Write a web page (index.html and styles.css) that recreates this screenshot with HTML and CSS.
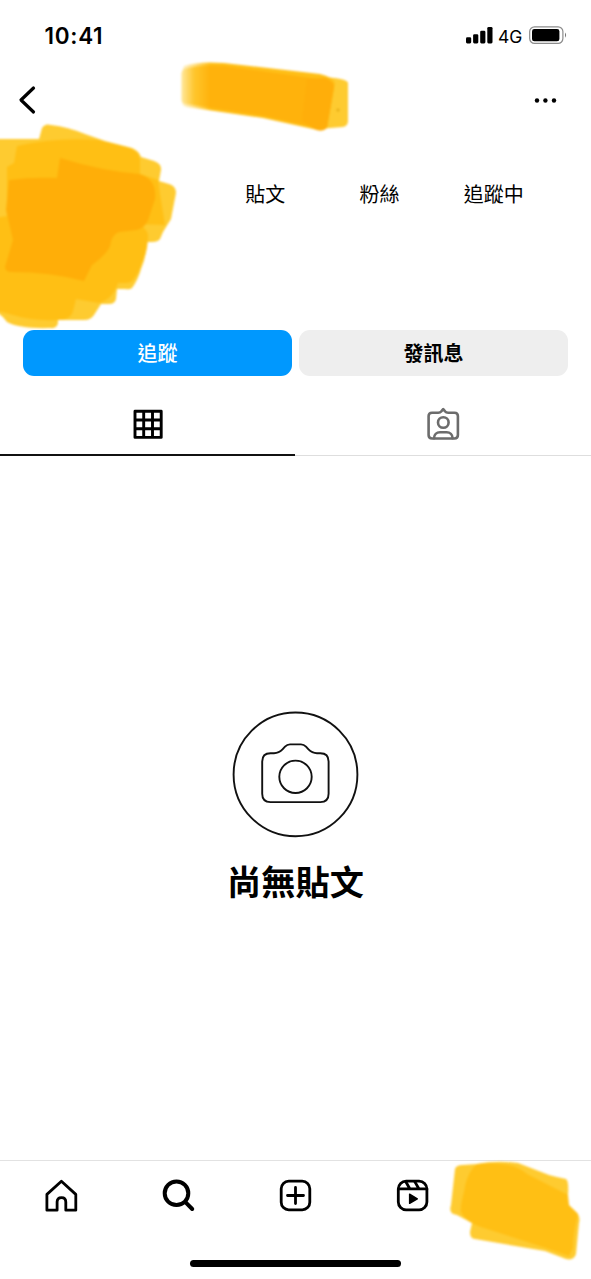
FILE: index.html
```html
<!DOCTYPE html>
<html lang="zh-Hant">
<head>
<meta charset="utf-8">
<title>個人檔案</title>
<link rel="stylesheet" href="styles.css">
</head>
<body>
<div class="screen">
  <div class="status">
    <span class="time">10:41</span>
    <div class="indicators">
      <svg class="signal" width="28" height="18" viewBox="465 26 28 18"><rect x="466" y="37.2" width="5.2" height="6.2" rx="1.3"/><rect x="473.1" y="34.2" width="5.2" height="9.2" rx="1.3"/><rect x="480.2" y="30.8" width="5.2" height="12.6" rx="1.3"/><rect x="487.3" y="27" width="5.2" height="16.4" rx="1.3"/></svg>
      <span class="network">4G</span>
      <svg class="battery" width="38" height="18" viewBox="529 26 38 18"><rect x="529.7" y="26.8" width="33.2" height="16.6" rx="4.8" fill="none" stroke="#8c8c8c" stroke-width="1.2"/><rect x="532" y="29" width="27.4" height="12.3" rx="2.4"/><path d="M565 32.5q2.2 2.6 0 5.2z" fill="#777"/></svg>
    </div>
  </div>

  <header class="topbar">
    <svg width="20" height="30" viewBox="18 85 20 30"><path d="M33.5 88 21 100l12.5 12" class="line back"/></svg>
    <svg width="24" height="6" viewBox="0 0 24 6"><circle cx="3" cy="3.5" r="2.2"/><circle cx="11.4" cy="3.5" r="2.2"/><circle cx="20" cy="3.5" r="2.2"/></svg>
  </header>

  <section class="profile">
    <div class="stats"><span>貼文</span><span>粉絲</span><span>追蹤中</span></div>
  </section>

  <div class="actions">
    <button class="btn primary">追蹤</button>
    <button class="btn">發訊息</button>
  </div>

  <nav class="tabs">
    <div class="tab active">
      <svg width="32" height="32" viewBox="132 408 32 32"><path d="M135 411.2h26.2v26.2h-26.2zM143.7 411.2v26.2M152.5 411.2v26.2M135 420h26.2M135 428.7h26.2" class="line grid"/></svg>
    </div>
    <div class="tab">
      <svg width="36" height="36" viewBox="425 406 36 36"><path d="M432 412.7h6.2c1.7 0 2.5-.5 3.3-1.5l1.7-2 1.7 2c.8 1 1.6 1.5 3.3 1.5h6.3q3.4 0 3.4 3.4v19q0 3.4-3.4 3.4H432q-3.4 0-3.4-3.4v-19q0-3.4 3.4-3.4z" class="line muted"/><circle cx="443.3" cy="422.5" r="5.3" class="line muted"/><path d="M434 438.2c0-3.7 2.6-6 6-6h6.6c3.4 0 6 2.3 6 6" class="line muted"/></svg>
    </div>
  </nav>

  <main class="empty">
    <svg width="128" height="128" viewBox="232 711 128 128"><circle cx="295.5" cy="774.4" r="61.9" class="line thin"/><path d="M270.5 753.2h3.5c4.2 0 6-1.1 8.5-3.8l2.5-2.7c1.5-1.6 2.7-2.3 5-2.3h11c2.3 0 3.5.7 5 2.3l2.5 2.7c2.5 2.7 4.3 3.8 8.5 3.8h3.3q8.3 0 8.3 8.3v32.3q0 8.3-8.3 8.3h-49.8q-8.3 0-8.3-8.3v-32.3q0-8.3 8.3-8.3z" class="line thin"/><circle cx="295.5" cy="776.8" r="16.2" class="line thin"/></svg>
    <h1>尚無貼文</h1>
  </main>

  <footer class="bottom">
    <nav class="dock">
      <svg width="36" height="36" viewBox="44 1178 36 36"><path d="M46.9 1210.2v-15.8l14.5-13.1 14.4 13.1v15.8h-10v-8.3q0-4.3-4.3-4.3t-4.4 4.3v8.3z" class="line icon"/></svg>
      <svg width="36" height="36" viewBox="161 1178 36 36"><circle cx="176.5" cy="1193.3" r="11.8" class="line search"/><path d="m185.4 1202.2 6.8 6.8" class="line search"/></svg>
      <svg width="36" height="36" viewBox="278 1178 36 36"><rect x="281.2" y="1181.2" width="28.6" height="28.6" rx="7.5" class="line icon"/><path d="M295.5 1187.5v16M287.5 1195.5h16" class="line icon"/></svg>
      <svg width="36" height="36" viewBox="395 1178 36 36"><rect x="398.3" y="1181.2" width="28.6" height="28.6" rx="7.8" class="line icon"/><path d="M398.3 1188.9h28.6M405.8 1181.7l4 7M414.6 1181.4l4.3 7.3" class="line icon"/><path d="M409.6 1194.2v9.2l7.7-4.6z" class="play"/></svg>
      <span></span>
    </nav>
    <div class="home-indicator"></div>
  </footer>

  <svg class="marker" width="591" height="1279" viewBox="0 0 591 1279">
    <defs>
      <linearGradient id="fade" gradientUnits="userSpaceOnUse" x1="180" y1="0" x2="210" y2="0"><stop stop-color="#ffd75a" stop-opacity=".3"/><stop offset=".5" stop-color="#ffc52a"/><stop offset="1" stop-color="#ffb20c"/></linearGradient>
      <linearGradient id="edge" gradientUnits="userSpaceOnUse" x1="180" y1="0" x2="210" y2="0"><stop stop-color="#ffd75a" stop-opacity=".3"/><stop offset="1" stop-color="#ffbf17"/></linearGradient>
    </defs>
    <g>
      <path fill="#fecb30" d="M320 77q27 1 28 6v38q0 5-5 6l-25 2z"/>
      <path fill="url(#edge)" d="M184 66q14-5 40-3l96 11q13 3 15 9l-8 44q-4 4-14 2l-50-11-76-11q-5-1-5-5V71z"/>
      <path fill="url(#fade)" d="M184 69q16-5 41-3l94 13q15 1 15 8l-7 39q-3 4-14 1l-49-11-78-12q-5-1-5-5V73z"/>
      <path fill="#ffae0a" d="M307 79l18-1q9 3 9 9l-7 41q-5 5-13 1l-12-9z"/>
      <circle cx="338" cy="110" r="1.5" fill="#e6ad16"/>
    </g>
    <g>
      <path fill="#fecb30" d="M-5 139h44l3-11q3-5 9-3 17 2 34 9l20 7 27 7q7 3 9 9l13 4q8 3 7 9l-2 11 10 3q7 2 7 9l-5 26-8 13-3 7q-2 3-8 3h-5q-1 16-6 27-3 11-9 19-2 2-7 1h-8l-1 10q-1 5-7 5h-8l-7 11q-3 5-10 5H58v3q-1 6-8 5-30 1-43-6-4-6-12-11z"/>
      <path fill="#ffbf14" d="M17 146q38-9 81-6l28 7q13 3 14 13v14l18 6 2 14 5 31-26-1q8 5 9 11 0 17-6 27-3 11-9 18-2 3-8 3h-7q-5 16-19 20l-23-4-3 12q-2 9-16 9-26 1-44-5l-18-5V218l12-2V167l7-4z"/>
      <path fill="#ffae08" d="M9 180q23-3 48-2l3-20q42 13 79 16 18 5 16 25l-7 21q-3 8-12 10l-17 2q-7 2-9 14-3 8-18 19l-8 16q-34-9-72-9-7 0-7-5l8-27-7-30z"/>
    </g>
    <g>
      <path fill="#fecb30" d="M455 1169q1-4 8-4l14-1q19-4 41-1l31 12q7 2 17 4 3 2 2 16l-1 9 8 7q6 5 4 12l-3 31q-2 7-10 5l-21-8-70-12q-5 0-5-7l2-9-15-8q-9-1-6-10z"/>
      <path fill="#ffbf14" d="M477 1164q14-2 31 1 11 2 19 9l41 21 1 10 9 9q-5 20-5 34l-4 8-23-8-65-21q-15-5-20-15-1-5 3-20 2-15 9-24z"/>
    </g>
  </svg>
</div>
</body>
</html>
```
FILE: styles.css
```css
* { box-sizing: border-box; }
body { margin: 0; background: #fff; color: #000; font-family: "Liberation Sans", "Noto Sans CJK TC", sans-serif; }
.screen { position: relative; width: 591px; height: 1279px; overflow: hidden; display: flex; flex-direction: column; }
svg { display: block; flex: none; }
.line { fill: none; stroke: #000; stroke-linecap: round; stroke-linejoin: round; }
.back { stroke-width: 3.2; }
.grid { stroke-width: 2.9; }
.muted { stroke: #6c6c6c; stroke-width: 2.6; }
.thin { stroke: #111; stroke-width: 1.9; }
.icon { stroke-width: 2.8; }
.search { stroke-width: 4; }
.play { stroke: #000; stroke-width: 1.4; stroke-linejoin: round; }

.status { height: 70px; padding: 0 24px 0 44.5px; display: flex; align-items: center; justify-content: space-between; font-family: Inter, sans-serif; }
.time { padding-top: 1px; font-size: 22.5px; font-weight: 580; letter-spacing: 0.7px; }
.indicators { display: flex; align-items: center; }
.network { width: 36px; padding: 2px 0 0 5px; font-size: 17.5px; }

.topbar { height: 60px; padding: 0 33px 0 18px; display: flex; align-items: center; justify-content: space-between; }

.profile { height: 200px; padding: 49px 40px 0 208px; }
.stats { display: grid; grid-template-columns: repeat(3, 1fr); text-align: center; font-family: "Noto Sans CJK TC", sans-serif; font-size: 20px; line-height: 30px; }

.actions { height: 45.5px; padding: 0 23px; display: grid; grid-template-columns: 1fr 1fr; gap: 7px; }
.btn { border: 0; border-radius: 11px; padding: 0; background: #eee; color: #000; font: 700 20px/45px "Noto Sans CJK TC", sans-serif; }
.primary { background: #0098fe; color: #fff; font-weight: 500; }

.tabs { height: 80.5px; display: grid; grid-template-columns: 295px 1fr; }
.tab { display: flex; align-items: center; justify-content: center; padding-top: 18px; border-bottom: 1px solid #dedede; }
.active { border-bottom: 2px solid #111; height: 80px; }

.empty { flex: 1; padding-top: 254.5px; display: flex; flex-direction: column; align-items: center; }
.empty h1 { margin: 16.5px 0 0; font: 700 34.2px/50px "Noto Sans CJK TC", sans-serif; }

.bottom { height: 119px; border-top: 1px solid #e2e2e2; display: flex; flex-direction: column; align-items: center; }
.dock { width: 585px; height: 99px; padding-top: 17px; display: grid; grid-template-columns: repeat(5, 1fr); justify-items: center; align-items: start; }
.home-indicator { width: 211px; height: 7px; border-radius: 4px; background: #000; }
.marker { position: absolute; left: 0; top: 0; pointer-events: none; }
.marker g { filter: blur(0.9px); }
```
